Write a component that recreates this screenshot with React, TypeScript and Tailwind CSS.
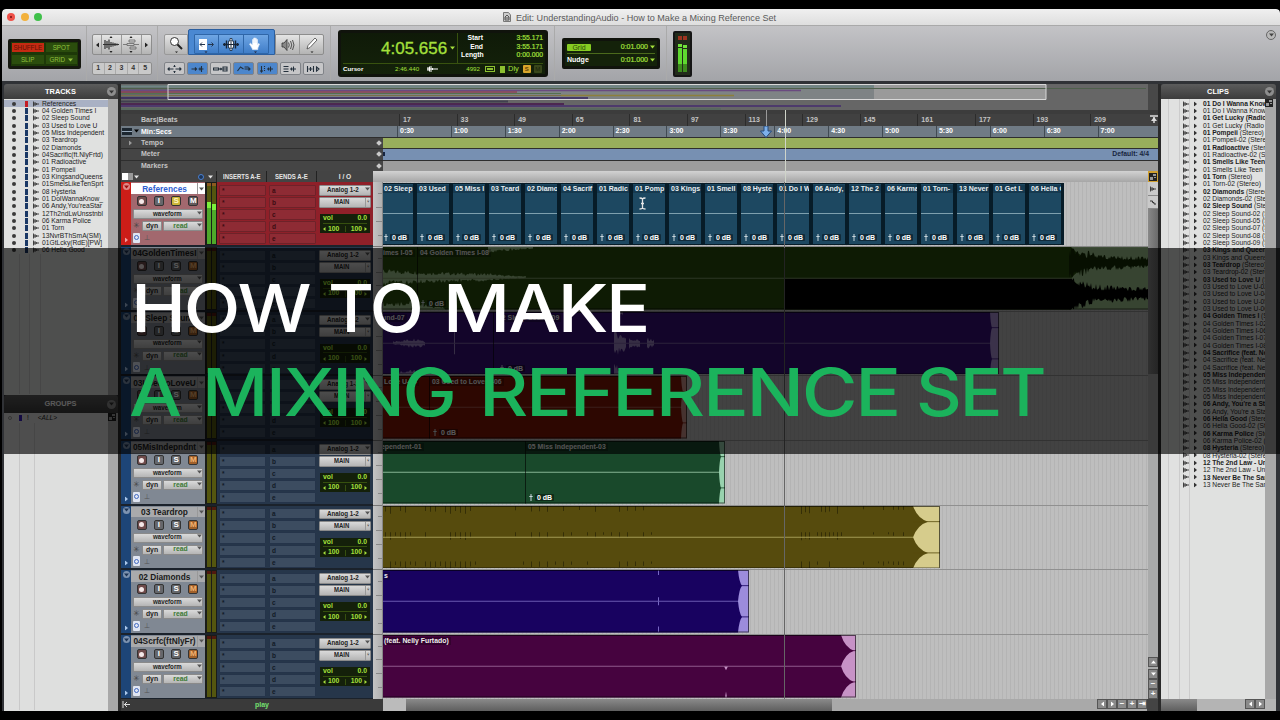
import React, { useLayoutEffect, useRef, useState } from "react";

const tracksList = [
  "References",
  "04 Golden Times I",
  "02 Sleep Sound",
  "03 Used to Love U",
  "05 Miss Independent",
  "03 Teardrop",
  "02 Diamonds",
  "04Sacrific(ft.NlyFrtd)",
  "01 Radioactive",
  "01 Pompeii",
  "03 KingsandQueens",
  "01SmelsLikeTenSprt",
  "08 Hysteria",
  "01 DoIWannaKnow_",
  "06 Andy,You'reaStar",
  "12Th2ndLwUnsstnbl",
  "06 Karma Police",
  "01 Torn",
  "13NvrBThSmA(SM)",
  "01GtLcky(RdE)[PW]",
  "06 Hella Good",
];

// [bold part, regular part]
const clipsList = [
  ["01 Do I Wanna Know", ""],
  ["", "01 Do I Wanna Know"],
  ["01 Get Lucky (Radio", ""],
  ["", "01 Get Lucky (Radio"],
  ["01 Pompeii", " (Stereo)"],
  ["", "01 Pompeii-02 (Stereo)"],
  ["01 Radioactive", " (Stereo)"],
  ["", "01 Radioactive-02 (Stereo)"],
  ["01 Smells Like Teen", ""],
  ["", "01 Smells Like Teen"],
  ["01 Torn", " (Stereo)"],
  ["", "01 Torn-02 (Stereo)"],
  ["02 Diamonds", " (Stereo)"],
  ["", "02 Diamonds-02 (Stereo)"],
  ["02 Sleep Sound", " (Stereo)"],
  ["", "02 Sleep Sound-02 (Stereo)"],
  ["", "02 Sleep Sound-05 (Stereo)"],
  ["", "02 Sleep Sound-07 (Stereo)"],
  ["", "02 Sleep Sound-08 (Stereo)"],
  ["", "02 Sleep Sound-09 (Stereo)"],
  ["03 Kings and Queens", ""],
  ["", "03 Kings and Queens"],
  ["03 Teardrop", " (Stereo)"],
  ["", "03 Teardrop-02 (Stereo)"],
  ["03 Used to Love U", " (Stereo)"],
  ["", "03 Used to Love U-02"],
  ["", "03 Used to Love U-04"],
  ["", "03 Used to Love U-05"],
  ["", "03 Used to Love U-06"],
  ["04 Golden Times I", " (Stereo)"],
  ["", "04 Golden Times I-02"],
  ["", "04 Golden Times I-06"],
  ["", "04 Golden Times I-07"],
  ["", "04 Golden Times I-08"],
  ["04 Sacrifice (feat. Nelly", ""],
  ["", "04 Sacrifice (feat. Nelly"],
  ["", "04 Sacrifice (feat. Nelly"],
  ["05 Miss Independent", ""],
  ["", "05 Miss Independent-01"],
  ["", "05 Miss Independent-02"],
  ["", "05 Miss Independent-03"],
  ["06 Andy, You're a Star", ""],
  ["", "06 Andy, You're a Star"],
  ["06 Hella Good", " (Stereo)"],
  ["", "06 Hella Good-02 (Stereo)"],
  ["06 Karma Police", " (Stereo)"],
  ["", "06 Karma Police-02 (Stereo)"],
  ["08 Hysteria", " (Stereo)"],
  ["", "08 Hysteria-02 (Stereo)"],
  ["12 The 2nd Law - Unsust", ""],
  ["", "12 The 2nd Law - Unsust"],
  ["13 Never Be The Same", ""],
  ["", "13 Never Be The Same"],
];

const refClips = [
  "02 Sleep",
  "03 Used",
  "05 Miss I",
  "03 Teard",
  "02 Diamo",
  "04 Sacrif",
  "01 Radic",
  "01 Pomp",
  "03 Kings",
  "01 Smell",
  "08 Hyste",
  "01 Do I W",
  "06 Andy,",
  "12 The 2",
  "06 Karma",
  "01 Torn-",
  "13 Never",
  "01 Get L",
  "06 Hella G",
];

const channels = [
  "References",
  "04GoldenTimesI",
  "02 Sleep Sound",
  "03UsedtoLoveU",
  "05MisIndepndnt",
  "03 Teardrop",
  "02 Diamonds",
  "04Scrfc(ftNlyFr)",
];

const bars = ["17", "33", "49", "65", "81", "97", "113", "129", "145", "161", "177", "193", "209"];
const times = ["0:30", "1:00", "1:30", "2:00", "2:30", "3:00", "3:30", "4:00", "4:30", "5:00", "5:30", "6:00", "6:30", "7:00"];

// stretches its text to a given width
const Fit = ({ width, className = "", children }: { width: number; className?: string; children: React.ReactNode }) => {
  const ref = useRef<HTMLSpanElement>(null);
  const [scale, setScale] = useState(1);
  useLayoutEffect(() => {
    if (ref.current) setScale(width / ref.current.offsetWidth);
  }, [width]);
  return (
    <span className={`inline-block whitespace-nowrap ${className}`} style={{ width }}>
      <span ref={ref} className="inline-block origin-left" style={{ transform: `scaleX(${scale})` }}>
        {children}
      </span>
    </span>
  );
};

const noise = (n: number) => {
  const v = Math.sin(n * 12.9898) * 43758.5453;
  return v - Math.floor(v);
};

// jagged band around a centre line
const band = (x0: number, x1: number, c: number, a0: number, a1: number) => {
  let top = "";
  let bottom = "";
  for (let x = x0; x <= x1; x += 1) {
    const amp = a0 + ((a1 - a0) * (x - x0)) / (x1 - x0);
    top += `L${x} ${(c - amp * (0.35 + 0.65 * noise(x + c))).toFixed(1)}`;
    bottom = `L${x} ${(c + amp * (0.35 + 0.65 * noise(x * 3 + c))).toFixed(1)}` + bottom;
  }
  return `M${x0} ${c}${top}${bottom}Z`;
};

// full channel that fades out at its right end
const body = (c: number, from: number, to: number) => {
  const d = to - from;
  return `M0 ${c - 15.5}H${from}Q${from + d * 0.3} ${c - 3} ${to} ${c}Q${from + d * 0.3} ${c + 3} ${from} ${c + 15.5}H0Z`;
};

const Caret = ({ className = "" }: { className?: string }) => (
  <svg className={`shrink-0 ${className}`} width="5" height="4" viewBox="0 0 5 4">
    <path d="M0 .5h5L2.5 3.5z" fill="currentColor" />
  </svg>
);

const WaveGlyph = () => (
  <svg width="7" height="6" viewBox="0 0 7 6" className="shrink-0">
    <path d="M.5 .5v5M2 1v4M3.3 2v2M0 3h6" stroke="#333" strokeWidth=".9" />
  </svg>
);

const PanelHead = ({ title }: { title: string }) => (
  <div className="flex h-full items-center rounded-t-[3px] bg-linear-to-b from-[#5c5c5c] to-[#3c3c3c] pr-[2px]">
    <span className="flex-1 pl-[10px] text-center text-[7.4px] font-bold text-white">{title}</span>
    <span className="flex h-[9px] w-[9px] items-center justify-center rounded-full bg-[#8d8d8d] text-[#333]">
      <Caret />
    </span>
  </div>
);

const Checker = () => (
  <svg width="8" height="8" viewBox="0 0 8 8">
    <path d="M0 0h8v8H0z" fill="#222" />
    <path d="M4 1h3v2H4zM1 4h3v3H1zM5 4h2v1H5z" fill="#999" />
  </svg>
);

const TitleBar = () => (
  <div className="flex h-[17px] shrink-0 items-center rounded-t-[4px] border-b border-[#a9a9a9] bg-linear-to-b from-[#f0f0f0] to-[#dedede] pl-[5px]">
    <div className="flex w-[496px] gap-[5.5px]">
      <span className="flex h-[8px] w-[8px] items-center justify-center rounded-full bg-[#ee5048]">
        <span className="h-[2px] w-[2px] rounded-full bg-[#701010]" />
      </span>
      <span className="h-[8px] w-[8px] rounded-full bg-[#f2b13c]" />
      <span className="h-[8px] w-[8px] rounded-full bg-[#3fc04a]" />
    </div>
    <svg width="8" height="10" viewBox="0 0 8 10">
      <path d="M.5.5h5L7.5 3v6.5h-7z" fill="#ccc" stroke="#777" />
      <path d="M2 8V5l2-2 2 2v3zM2 6h4" fill="none" stroke="#555" />
    </svg>
    <Fit width={260} className="mt-[3px] ml-[5px] text-[9.2px] text-[#5a5a5a]">
      Edit: UnderstandingAudio - How to Make a Mixing Reference Set
    </Fit>
  </div>
);

const toolBtn = "flex items-center justify-center border-r border-[#999] last:border-r-0";

const smallIcons = [
  "M1 4h5M2 2.5L.5 4 2 5.500M8 4h5M12 2.500L13.500 4 12 5.500M6 1.500h2M6 6.500h2M7 0v1M7 7v1",
  "M1 4h5M4.500 2.500L6 4 4.500 5.500M8 4h5M9.500 2.500v3M11 1v6",
  "M0 3h5v2H0zM5 4h3M7 2.800L8.200 4 7 5.200M9.500 2h4v4h-4zM9.500 4h4",
  "M1 6l3-4 3 2M8 2h4M8 4h5M12 2.500l1.500 1.500L12 5.500",
  "M2 1v6M.8 5.500L2 7l1.200-1.500M5 1v1M5 3v1M5 5v1M7.500 4h6M9 2.500v3M11 1.500v5",
  "M1 1.500h5M1 4h5M1 6.500h5M7.500 4h6M9 2.500v3M11 1.500v5",
  "M2 1v6M3 4h4M5 2v4M8 1v6M11 2l2.500 2L11 6z",
];

const smallStyles = [
  "bg-[#c6c6c8]",
  "bg-[#4c86cc]",
  "bg-[#c6c6c8]",
  "bg-[#4c86cc]",
  "bg-[#4c86cc]",
  "bg-[#c6c6c8]",
  "bg-[#c6c6c8]",
];

const Toolbar = () => (
  <div className="flex h-[55px] shrink-0 items-start bg-linear-to-b from-[#c3c3c6] to-[#a3a4a8]">
    {/* edit modes */}
    <div className="flex h-full w-[85px] items-center border-r border-[#aaa] pl-[6px]">
      <div className="grid h-[30px] w-[73px] grid-cols-2 items-center rounded-[2px] border-[3px] border-[#15170f] bg-[#1d3808] text-center text-[6.3px] leading-[9px] text-[#93c03d]">
        <span className="m-px bg-[#c42a12] text-[#5f1205]">SHUFFLE</span>
        <span className="m-px bg-[#2b4d0d]">SPOT</span>
        <span className="m-px bg-[#2b4d0d]">SLIP</span>
        <span className="m-px flex items-center justify-center gap-[3px] bg-[#2b4d0d]">
          GRID <Caret />
        </span>
      </div>
    </div>
    {/* zoom */}
    <div className="flex h-full w-[71px] flex-col items-center border-r border-[#aaa] pt-[8px]">
      <div className="flex h-[21px] w-[60px] rounded-[2px] border border-[#8d8d8d] bg-linear-to-b from-[#e4e4e4] to-[#b4b4b4]">
        <div className={`${toolBtn} w-[9px] text-[#222]`}>
          <Caret className="rotate-90" />
        </div>
        <div className={`${toolBtn} flex-1`}>
          <svg width="17" height="17" viewBox="0 0 17 17">
            <path d="M2 4v9M4 5v7M6 3.500v10M8 6v5M10 6.500v4M12 7v3M14 7.500v2M0 8.500h16" stroke="#333" strokeWidth="1.200" />
            <path d="M6.500 2L8 0l1.500 2zM6.500 15L8 17l1.500-2z" fill="#222" />
          </svg>
        </div>
        <div className={`${toolBtn} flex-1`}>
          <svg width="17" height="17" viewBox="0 0 17 17">
            <path d="M6 4h6v2H6zM4 7.500h7v2H4zM7 11h6v2H7zM0 8.500h4M11 8.500h5" fill="none" stroke="#666" strokeWidth=".8" />
            <path d="M6.500 2L8 0l1.500 2zM6.500 15L8 17l1.500-2z" fill="#222" />
          </svg>
        </div>
        <div className={`${toolBtn} w-[9px] text-[#222]`}>
          <Caret className="-rotate-90" />
        </div>
      </div>
      <div className="mt-[7px] grid h-[13px] w-[60px] grid-cols-5 items-center rounded-[2px] border border-[#8d8d8d] bg-[#c9c9c9] text-center text-[7px] font-bold text-[#333]">
        {[1, 2, 3, 4, 5].map((n) => (
          <span key={n} className="border-r border-[#aaa] last:border-r-0">{n}</span>
        ))}
      </div>
    </div>
    {/* edit tools */}
    <div className="h-full w-[173px] border-r border-[#aaa] pt-[3px] pl-[6px]">
      <div className="flex h-[26px] items-end">
        <div className={`h-[21px] w-[24px] rounded-l-[2px] border border-[#8d8d8d] bg-linear-to-b from-[#e4e4e4] to-[#b4b4b4] ${toolBtn}`}>
          <svg width="15" height="17" viewBox="0 0 15 17">
            <circle cx="5.500" cy="5.500" r="4" fill="#fff" stroke="#333" />
            <path d="M8.500 8.500l4.500 4.500" stroke="#222" strokeWidth="2" />
            <path d="M6 15.500h3l-1.500 1.500z" fill="#222" />
          </svg>
        </div>
        <div className="flex h-[26px] w-[87px] items-end rounded-t-[2px] border border-[#2c5f9f] bg-[#4a88d2] px-[5px]">
          <div className="grid h-[20px] w-full grid-cols-3 rounded-[1px] border border-[#2f66a8] bg-linear-to-b from-[#6fa6e4] to-[#3f7dc8]">
            <div className="flex items-center justify-center border-r border-[#2f66a8]">
              <svg width="18" height="17" viewBox="0 0 18 17">
                <path d="M1 3h8v11H1z" fill="#fff" />
                <path d="M2 8.500h5M4 6.500l-2 2 2 2M10 8.500h5M13.500 6.500l2 2-2 2" fill="none" stroke="#24364e" />
                <path d="M6.500 15.500h3L8 17z" fill="#223" />
              </svg>
            </div>
            <div className="flex items-center justify-center border-r border-[#2f66a8]">
              <svg width="18" height="17" viewBox="0 0 18 17">
                <path d="M1 8.500h16M2.500 7v3M4.500 4.500v8M13.500 4.500v8M15.500 7v3" stroke="#182638" strokeWidth="1.400" />
                <path d="M6.500 5H8V2.500h2V5h1.500v7H10v2.500H8V12H6.500z" fill="#fff" stroke="#182638" strokeWidth=".8" />
                <path d="M3 8.500h12M9 4v9" stroke="#182638" />
              </svg>
            </div>
            <div className="flex items-center justify-center">
              <svg width="15" height="17" viewBox="0 0 15 17">
                <path d="M4 12L1.500 8l1-.8L4.500 9V3.500h1.200V7V2h1.300v5V2.200h1.300V7V3.500h1.200V9l1-1.500 1 .6L9.800 12v1.500H4.500z" fill="#fff" stroke="#e8f0fb" strokeWidth=".6" />
                <path d="M6 15.500h3l-1.500 1.500z" fill="#223" />
              </svg>
            </div>
          </div>
        </div>
        <div className="flex h-[21px] w-[49px] rounded-r-[2px] border border-[#8d8d8d] bg-linear-to-b from-[#e4e4e4] to-[#b4b4b4]">
          <div className={`${toolBtn} flex-1`}>
            <svg width="14" height="14" viewBox="0 0 14 14">
              <path d="M1 5h2l3-3.500v11L3 9H1z" fill="#888" stroke="#333" strokeWidth=".8" />
              <path d="M7.500 4.500q1.500 2.500 0 5M9.500 3q2.500 4 0 8M11.500 2q3 5 0 10" fill="none" stroke="#444" strokeWidth=".9" />
            </svg>
          </div>
          <div className={`${toolBtn} flex-1`}>
            <svg width="14" height="17" viewBox="0 0 14 17">
              <path d="M2 13l1-3.500L10 2l2 2-7 7.500z" fill="#fff" stroke="#444" strokeWidth=".8" />
              <path d="M5.500 15.500h3L7 17z" fill="#222" />
            </svg>
          </div>
        </div>
      </div>
      <div className="mt-[7px] flex w-[160px] justify-between">
        {smallIcons.map((d, i) => (
          <span key={i} className={`flex h-[13px] w-[21px] items-center justify-center rounded-[2px] border border-[#808388] ${smallStyles[i]}`}>
            <svg width="16" height="8" viewBox="0 0 15 8">
              <path d={d} fill="none" stroke="#24303c" strokeWidth="1.100" />
            </svg>
          </span>
        ))}
      </div>
    </div>
    {/* main counter */}
    <div className="h-full w-[224px] border-r border-[#aaa] pt-[4px] pl-[7px]">
      <div className="flex h-[47px] w-[210px] flex-col rounded-[3px] border-[3px] border-[#10130c] bg-linear-to-b from-[#0f1a08] to-[#14220a] px-[2px] text-[#a5e03c]">
        <div className="flex h-[31px] border-b border-[#38520f]">
          <div className="flex w-[115px] items-center justify-end gap-[3px] border-r border-[#38520f] pr-[2px]">
            <Fit width={66} className="text-[17px] leading-none [-webkit-text-stroke:.3px_#a5e03c]">
              4:05.656
            </Fit>
            <Caret />
          </div>
          <div className="flex flex-1 flex-col pt-px pl-[3px] text-[6.800px] leading-[8.500px]">
            {[
              ["Start", "3:55.171"],
              ["End", "3:55.171"],
              ["Length", "0:00.000"],
            ].map(([k, v]) => (
              <div key={k} className="flex justify-between">
                <span className="w-[22px] text-right font-bold text-white">{k}</span>
                <span className="[-webkit-text-stroke:.2px_#a5e03c]">{v}</span>
              </div>
            ))}
          </div>
        </div>
        <div className="flex h-[10px] items-center text-[6.200px]">
          <span className="w-[52px] font-bold text-white">Cursor</span>
          <span className="w-[30px]">2:46.440</span>
          <svg width="12" height="6" viewBox="0 0 12 6" className="ml-[2px]">
            <path d="M1 1v4M2.500 .5v5M4 0v6M5.500 2v2M0 3h11" stroke="#fff" />
          </svg>
          <span className="w-[41px] text-right">4992</span>
          <span className="ml-[5px] flex h-[6px] w-[10px] items-center justify-center border border-[#8cc030]">
            <span className="h-[2px] w-[6px] bg-[#8cc030]" />
          </span>
          <span className="ml-[5px] h-[7px] w-[5px] bg-[#8cc030]" />
          <span className="ml-[3px] text-[7.500px]">Dly</span>
          <span className="ml-[4px] flex h-[8px] w-[8px] items-center justify-center rounded-[1px] bg-[#d9a62c] text-[6px] font-bold text-[#5c4205]">S</span>
          <span className="ml-[3px] flex h-[8px] w-[8px] items-center justify-center rounded-[1px] bg-[#39471b] text-[6px] text-[#1a230a]">M</span>
        </div>
      </div>
    </div>
    {/* grid and nudge */}
    <div className="flex h-full w-[112px] items-center border-r border-[#aaa] pl-[7px]">
      <div className="flex h-[31px] w-[98px] flex-col rounded-[2px] border-[3px] border-[#10130c] bg-[#14220a] px-[2px] text-[7px] text-[#a5e03c]">
        <div className="flex h-[13px] items-center border-b border-[#4b6a1c]">
          <span className="h-[7px] w-[24px] rounded-[1px] bg-[#86cc22] text-center leading-[7px] text-[#2c4a08]">Grid</span>
          <span className="flex-1 text-right [-webkit-text-stroke:.2px_#a5e03c]">0:01.000</span>
          <Caret className="ml-[2px]" />
        </div>
        <div className="flex flex-1 items-center">
          <span className="font-bold text-white">Nudge</span>
          <span className="flex-1 text-right [-webkit-text-stroke:.2px_#a5e03c]">0:01.000</span>
          <Caret className="ml-[2px]" />
        </div>
      </div>
    </div>
    {/* output meter */}
    <div className="pt-[5px] pl-[6px]">
      <div className="flex h-[46px] w-[19px] justify-center gap-px rounded-[2px] border-2 border-[#151515] bg-[#222b1b] pt-[3px] pb-[3px]">
        {[0, 1].map((n) => (
          <div key={n} className="flex w-[4px] flex-col">
            <span className="h-[4px] bg-[#9c3420]" />
            <span className={`bg-[#71e53a] ${n ? "mt-[5px] h-[3px]" : "mt-[4px] h-[3px]"}`} />
            <span className="mt-px flex-1 bg-[#5fd92f]" />
            <span className="h-[8px] bg-[#3d8c1d]" />
          </div>
        ))}
      </div>
    </div>
    <div className="flex flex-1 justify-end pt-[4px] pr-[4px]">
      <span className="flex h-[10px] w-[10px] items-center justify-center rounded-full border border-[#666] bg-[#b9b9b9] text-[#444]">
        <Caret />
      </span>
    </div>
  </div>
);

const LeftPanel = () => (
  <div className="flex w-[114px] shrink-0 flex-col">
    <div className="h-[15px]">
      <PanelHead title="TRACKS" />
    </div>
    <div className="flex h-[296px] bg-[#e0e1e0]">
      <div className="flex-1 pt-[1px]">
        {tracksList.map((name, i) => (
          <div key={name} className={`flex h-[7.333px] items-center text-[6.700px] leading-none text-[#222] ${i === 0 ? "bg-[#a9b1c4]" : ""}`}>
            <span className="ml-[8px] h-[4px] w-[4px] rounded-full bg-[#3a3a3a]" />
            <span className={`ml-[9px] h-[6px] w-[3px] ${i === 0 ? "bg-[#c41c24]" : "bg-[#1a3866]"}`} />
            <span className="ml-[5px] flex w-[9px] items-center">
              <WaveGlyph />
            </span>
            <span className="pt-px whitespace-nowrap">{name}</span>
          </div>
        ))}
        <div className="ml-[15px] h-[140px] w-[22px] border-x border-[#c9c9c9]">
          <div className="ml-[9px] h-full border-l border-[#c9c9c9]" />
        </div>
      </div>
      <div className="w-[10px] bg-[#a8a8a8]" />
    </div>
    <div className="h-[18px]">
      <PanelHead title="GROUPS" />
    </div>
    <div className="flex flex-1 bg-[#dedfde]">
      <div className="flex-1">
        <div className="flex h-[10px] items-center text-[6.500px] text-[#222]">
          <span className="ml-[4px] h-[4px] w-[4px] rounded-full border border-[#999]" />
          <span className="ml-[7px] h-[6px] w-[3px] bg-[#3a20c0]" />
          <span className="ml-[5px]">!</span>
          <span className="ml-[9px] italic">&lt;ALL&gt;</span>
        </div>
        <div className="ml-[15px] h-full max-h-[287px] w-[16px] border-x border-[#c9c9c9]" />
      </div>
      <div className="w-[10px] bg-[#a8a8a8]">
        <Checker />
      </div>
    </div>
  </div>
);

const Overview = () => (
  <div className="relative h-[26px] bg-[#666]">
    <svg className="block" width="1037" height="26" viewBox="0 0 1037 26">
      <path d="M47 .5h878v15H47z" fill="#9a9a9a" />
      <path d="M0 1h753v14H0z" fill="#5d686c" fillOpacity=".45" />
      <path d="M0 4.500h1025" stroke="#4f604c" />
      <path d="M0 2.500h753" stroke="#6e8584" strokeWidth="2" />
      <path d="M0 6.500h680" stroke="#6a4a80" strokeWidth="1.500" />
      <path d="M0 8h396" stroke="#8c4256" strokeWidth="1.500" />
      <path d="M0 9.500h440" stroke="#557050" />
      <path d="M440 11.500h173" stroke="#8c7f3c" strokeWidth="1.500" />
      <path d="M0 14h467" stroke="#35235f" strokeWidth="1.500" />
      <path d="M0 11.500h440" stroke="#7a6e4a" />
      <path d="M0 17.500h387" stroke="#40404f" strokeWidth="2" />
      <path d="M0 20h443" stroke="#4c2850" strokeWidth="2" />
      <path d="M0 22h720" stroke="#4d3a6c" strokeWidth="2" />
      <path d="M0 25h600" stroke="#4a6a58" />
      <path d="M47 .5h878v15H47z" fill="none" stroke="#d8d8d8" />
    </svg>
    <span className="absolute top-0 right-0 h-[26px] w-[10px] bg-[#484848]" />
  </div>
);

const rulerLabel = "w-[262px] shrink-0 pl-[20px] text-[7px] font-bold leading-none";

const Plus = () => <span className="mr-[2px] ml-auto h-[4px] w-[4px] rotate-45 bg-[#c9c9c9]" />;

const Rulers = () => (
  <div className="bg-[#3c3c3c] pt-[4px] text-[#c4c4c4]">
    <div className="flex h-[11.500px] items-center bg-[#414141]">
      <span className={rulerLabel}>Bars|Beats</span>
      <div className="ml-[16px] flex h-full overflow-hidden text-[7px] font-bold">
        {bars.map((b) => (
          <span key={b} className="flex w-[57.600px] shrink-0 items-center border-l border-[#2c2c2c] pl-[3px]">{b}</span>
        ))}
      </div>
      <svg className="ml-auto" width="8" height="9" viewBox="0 0 8 9">
        <path d="M0 1h8M4 2v6" stroke="#ddd" strokeWidth="1.500" />
        <path d="M1 6l3-4 3 4z" fill="#ddd" />
      </svg>
    </div>
    <div className="relative flex h-[11.500px] items-center bg-[#707b85] text-white">
      <div className="flex w-[20px] items-center pl-px text-black">
        <svg width="10" height="7" viewBox="0 0 10 7">
          <path d="M0 0h10v7H0z" fill="#1d2730" />
          <path d="M0 3.500h10" stroke="#9ab" />
        </svg>
        <Caret className="ml-[2px]" />
      </div>
      <span className="w-[256px] text-[7px] font-bold leading-none">Min:Secs</span>
      <div className="flex h-full overflow-hidden text-[7px] font-bold">
        {times.map((t) => (
          <span key={t} className="flex w-[53.900px] shrink-0 items-center border-l border-[#404a52] pl-[2px]">{t}</span>
        ))}
      </div>
      <svg className="absolute top-0 left-[639px]" width="12" height="12" viewBox="0 0 12 12">
        <path d="M4 0h4v5h3.500L6 11.500.5 5H4z" fill="#7db0ea" stroke="#254a7c" />
      </svg>
    </div>
    {["Tempo", "Meter", "Markers"].map((name, i) => (
      <div key={name} className="flex h-[11.333px] items-stretch border-t border-[#2e2e2e] bg-[#454545]">
        <div className="flex w-[262px] items-center text-[7px] font-bold">
          <span className="w-[20px] pl-[7px] text-[#999]">{i === 0 && <Caret className="-rotate-90" />}</span>
          {name}
          <Plus />
        </div>
        <div
          className={`flex flex-1 items-center justify-end pr-[9px] text-[6.800px] font-bold text-[#17253f] ${
            i === 0 ? "bg-[#98ae5c]" : i === 1 ? "bg-[#7790b2]" : "bg-[#9d9d9d]"
          }`}
        >
          {i === 1 && (
            <>
              <span className="mr-auto h-[4px] w-[2px] bg-[#17253f]" />
              Default: 4/4
            </>
          )}
        </div>
      </div>
    ))}
  </div>
);

const RoundBtn = ({ children, className }: { children: React.ReactNode; className: string }) => (
  <span className={`flex h-[10px] w-[10px] items-center justify-center rounded-[2px] border border-[#333] text-[8px] font-bold leading-none ${className}`}>
    {children}
  </span>
);

const light = "rounded-[1px] border border-[#8a8a8a] bg-linear-to-b from-[#dadada] to-[#b5b5b5]";

const PanArrow = ({ flip = false }: { flip?: boolean }) => (
  <svg width="3" height="4" viewBox="0 0 3 4" className={flip ? "rotate-180" : ""}>
    <path d="M2.500 0v4L0 2z" fill="currentColor" />
  </svg>
);

const Strip = ({ name, active }: { name: string; active: boolean }) => (
  <div className={`flex h-[64.667px] shrink-0 border-b-[2px] border-[#1b222b] ${active ? "bg-[#8f2029]" : "bg-[#26364a]"}`}>
    <div className={`flex w-[10px] flex-col items-center justify-between pt-px pb-[3px] ${active ? "bg-[#cc1d18]" : "bg-[#1d4577]"}`}>
      <span className={`flex h-[7px] w-[7px] items-center justify-center rounded-full ${active ? "bg-[#e08a88] text-[#a01010]" : "bg-[#7d93b0] text-[#1d3557]"}`}>
        <Caret />
      </span>
      <Caret className={`-rotate-90 ${active ? "text-[#f0a0a0]" : "text-[#a9c6ea]"}`} />
    </div>
    <div className={`w-[74px] ${active ? "bg-[#a2686e]" : "bg-[#808893]"}`}>
      <div className={`mt-px flex h-[10.500px] items-center justify-center pr-px ${active ? "bg-white text-[#2f5ed0]" : "bg-[#a9aaac] text-[#1a1a1a]"}`}>
        <span className="flex-1 overflow-hidden pl-px text-center text-[8.300px] font-bold leading-[10px] whitespace-nowrap">{name}</span>
        <span className="flex h-full w-[7px] items-center justify-center border-l border-[#999] text-[#555]">
          <Caret />
        </span>
      </div>
      <div className="mt-[2.500px] flex gap-[7.300px] pl-[5.500px]">
        <RoundBtn className="bg-[#6e4a4a] text-white">
          <span className="h-[5px] w-[5px] rounded-full bg-[#f4e8e8]" />
        </RoundBtn>
        <RoundBtn className="bg-[#65676b] text-white">I</RoundBtn>
        <RoundBtn className={active ? "bg-[#cdb63a] text-[#fff7c4]" : "bg-[#65676b] text-white"}>S</RoundBtn>
        <RoundBtn className={active ? "bg-[#65595c] text-white" : "bg-[#a0602a] text-[#f0b070]"}>M</RoundBtn>
      </div>
      <div className={`mx-[2px] mt-[3px] flex h-[10px] items-center ${light}`}>
        <span className="flex-1 pl-[3px] text-center text-[6.800px] font-bold leading-none text-[#222]">
          <Fit width={29}>waveform</Fit>
        </span>
        <Caret className="mb-[3px] text-[#555]" />
      </div>
      <div className="mt-[2px] mr-[2px] flex h-[10px] items-center gap-px">
        <span className="w-[10px] text-center text-[8px] leading-none text-[#444]">✳</span>
        <span className={`h-full w-[20px] text-center text-[6.800px] font-bold leading-[8px] text-[#222] ${light}`}>dyn</span>
        <span className={`flex h-full flex-1 items-center text-[6.800px] font-bold leading-none text-[#3c7a34] ${light}`}>
          <span className="flex-1 text-center">read</span>
          <Caret className="mb-[3px] text-[#555]" />
        </span>
      </div>
      <div className="mt-[1.500px] flex items-center gap-[4px] pl-[2px]">
        <span className="flex h-[10px] w-[7px] items-center justify-center rounded-[1px] bg-[#dfe5f2]">
          <span className="h-[5px] w-[5px] rounded-full border border-[#4168c0]" />
        </span>
        <span className="text-[7px] leading-none text-[#555]">⊥</span>
      </div>
    </div>
    <div className="flex w-[12px] justify-center gap-px bg-[#1a1c18] py-px">
      {[0, 1].map((n) => (
        <div key={n} className="flex w-[4px] flex-col bg-[#54560f]">
          <span className={`h-[3px] ${active ? "bg-[#8c5a20]" : "bg-[#50180f]"}`} />
          {active && (
            <>
              <span className={n ? "h-[18px]" : "h-[16px]"} />
              <span className="h-[6px] bg-[#7cf03c]" />
              <span className="flex-1 bg-[#4ea82a]" />
            </>
          )}
        </div>
      ))}
    </div>
    {["*****", "abcde"].map((letters) => (
      <div key={letters} className="flex w-[50px] flex-col gap-px pt-[2.500px] pr-[1.500px] pl-[2px]">
        {letters.split("").map((l, i) => (
          <span
            key={i}
            className={`h-[11.100px] rounded-[1px] border pl-[2px] text-[6.500px] font-bold leading-[9px] ${
              active ? "border-[#6e2229] bg-[#8e2b34] text-[#3c0c12]" : "border-[#25344a] bg-[#3c4c60] text-[#121a26]"
            }`}
          >
            {l}
          </span>
        ))}
      </div>
    ))}
    <div className="w-[56px] px-[2px] pt-[3px] text-[6.800px] font-bold leading-none text-[#222]">
      <div className={`flex h-[10.500px] items-center ${light}`}>
        <span className="flex-1 text-center">
          <Fit width={32}>Analog 1-2</Fit>
        </span>
        <Caret className="mb-[3px] text-[#555]" />
      </div>
      <div className={`mt-[1.500px] flex h-[10.500px] items-center ${light}`}>
        <span className="flex-1 pr-[2px] text-center">
          <Fit width={15}>MAIN</Fit>
        </span>
        <span className="h-full w-[5px] border-l border-[#999] text-center text-[6px]">♀</span>
      </div>
      <div className="mx-px mt-[6.500px] flex h-[19px] flex-col justify-around bg-[#14200a] px-[3px] text-[#a6e03c]">
        <div className="flex justify-between border-b border-[#36500f] pb-px">
          <span>vol</span>
          <span>0.0</span>
        </div>
        <div className="flex items-center justify-between">
          <span className="flex items-center gap-[2px]">
            <PanArrow />
            100
          </span>
          <span className="h-[6px] w-px bg-[#36500f]" />
          <span className="flex items-center gap-[2px]">
            100
            <PanArrow flip />
          </span>
        </div>
      </div>
    </div>
  </div>
);

const Gain = ({ className = "" }: { className?: string }) => (
  <span className={`flex h-[8px] items-center gap-[2px] text-[7px] font-bold leading-none text-white ${className}`}>
    <svg width="4" height="7" viewBox="0 0 4 7">
      <path d="M2 0v7M.3 2.500h3.400" stroke="#c9d6dc" />
    </svg>
    <span className="rounded-[1px] bg-black/40 px-[2px]">0 dB</span>
  </span>
);

type Wave = {
  width: number;
  from: number;
  to: number;
  dark: string;
  pale: string;
  line: string;
  splits?: number[];
  labels?: { x: number; text: string }[];
  gains?: number[];
  extra?: React.ReactNode;
};

const ticks = (from: number, to: number, step: number, y: number, h: number) => {
  let d = "";
  for (let x = from; x < to; x += step) {
    if (noise(x + y) > 0.3) d += `M${x} ${y}v${(h * (0.4 + 0.6 * noise(x))).toFixed(1)}`;
  }
  return d;
};

const waves: Wave[] = [
  {
    width: 766,
    from: 688,
    to: 722,
    dark: "#294e0c",
    pale: "#9fc48c",
    line: "#7f9a68",
    splits: [34],
    labels: [
      { x: -2, text: "imes I-05" },
      { x: 35, text: "04 Golden Times I-08" },
    ],
    gains: [37],
    extra: (
      <>
        <path d={band(0, 35, 30, 8, 7) + band(35, 110, 30, 6, 4) + band(110, 143, 30, 3, 1)} fill="#9fc48c" />
        <path d={band(0, 35, 62, 9, 9) + band(35, 62, 62, 7, 2) + band(105, 150, 0, 6, 2)} fill="#9fc48c" />
        <path d="M402 31H688Q698 44 722 47Q698 50 688 62H402z" fill="#000" />
        <path d={band(686, 720, 15.5, 17, 8) + band(720, 765, 15.5, 8, 6)} fill="#142c05" />
        <path d={band(686, 720, 46.5, 17, 9) + band(720, 765, 46.5, 9, 7)} fill="#000" />
      </>
    ),
  },
  {
    width: 616,
    from: 607,
    to: 609,
    dark: "#38107a",
    pale: "#a890d4",
    line: "#7d62a8",
    splits: [110],
    labels: [
      { x: -3, text: "und-07" },
      { x: 113, text: "02 Sleep Sound-09" },
    ],
    gains: [116],
    extra: (
      <path
        d={band(10, 34, 31, 2, 6) + band(34, 42, 31, 6, 3) + band(231, 243, 31, 14, 8) + band(246, 257, 31, 6, 4) + band(264, 271, 31, 6, 4) + band(16, 32, 62, 4, 5) + band(231, 240, 62, 13, 3) + band(231, 240, 0, 8, 4) + "M71 20h1v22h-1z"}
        fill="#9c84c4"
      />
    ),
  },
  {
    width: 304,
    from: 298,
    to: 300,
    dark: "#801405",
    pale: "#c89088",
    line: "#a8584c",
    splits: [46],
    labels: [
      { x: -1, text: "Love U-04" },
      { x: 47, text: "03 Used to Love U-06" },
    ],
    gains: [49],
  },
  {
    width: 342,
    from: 336,
    to: 338,
    dark: "#19492b",
    pale: "#98d2ae",
    line: "#86b494",
    splits: [142],
    labels: [
      { x: -4, text: "ependent-01" },
      { x: 143, text: "05 Miss Independent-03" },
    ],
    gains: [145],
  },
  {
    width: 557,
    from: 530,
    to: 545,
    dark: "#564b0d",
    pale: "#d6cc8c",
    line: "#a39a55",
    extra: (
      <path
        d={[0, 26, 55].map((y) => ticks(2.5, 95, 5, y, 8) + ticks(132.5, 275, 8, y, 6) + ticks(418.5, 460, 4, y, 8) + ticks(480.5, 525, 5, y, 4)).join("")}
        stroke="#2c2706"
        strokeOpacity=".8"
        fill="none"
      />
    ),
  },
  {
    width: 366,
    from: 355,
    to: 359,
    dark: "#180260",
    pale: "#9c8cdc",
    line: "#6a5ab0",
    labels: [{ x: -1, text: "s" }],
    extra: <path d="M275.500 0v5M275.500 27v8M275.500 56v6" stroke="#7767c4" />,
  },
  {
    width: 473,
    from: 458,
    to: 471,
    dark: "#46033f",
    pale: "#c792c6",
    line: "#8f5a8c",
    labels: [{ x: -1, text: "(feat. Nelly Furtado)" }],
    extra: <path d="M341 31h4l-2 4zM342 62l1-6 1 6z" fill="#c792c6" />,
  },
];

const WaveClip = ({ wave: w }: { wave: Wave }) => (
  <div className="relative h-[62.500px] overflow-hidden" style={{ width: w.width }}>
    <svg width={w.width} height="62.500" viewBox={`0 0 ${w.width} 62`} preserveAspectRatio="none" className="block">
      <path d={`M0 0h${w.width}v62H0z`} fill={w.pale} />
      <path d={body(15.5, w.from, w.to) + body(46.5, w.from, w.to)} fill={w.dark} />
      <path d={`M${w.from} 15.500H${w.width}M${w.from} 46.500H${w.width}`} stroke={w.dark} strokeWidth=".8" />
      {w.extra}
      <path d={`M0 31H${w.from}`} stroke={w.line} />
      {w.splits?.map((x) => (
        <path key={x} d={`M${x}.5 0v62`} stroke="#000" strokeOpacity=".6" />
      ))}
      <path d={`M0 .5H${w.width - 0.5}V61.500H0`} fill="none" stroke="#000" strokeOpacity=".6" />
    </svg>
    {w.labels?.map((l) => (
      <span key={l.text} className="absolute top-[2px] bg-black/25 px-[2px] text-[6.900px] font-bold leading-[8px] whitespace-nowrap text-[#eee]" style={{ left: l.x }}>
        {l.text}
      </span>
    ))}
    {w.gains?.map((x) => (
      <span key={x} className="absolute bottom-[2px]" style={{ left: x + 1 }}>
        <Gain />
      </span>
    ))}
  </div>
);

const Lanes = () => (
  <div className="relative flex-1 overflow-hidden bg-[repeating-linear-gradient(90deg,#bebebe_0_3px,#b4b4b4_3px_4px)]">
    <div className="flex h-[64.667px] flex-col border-b border-[#888]">
      <div className="flex h-[62.500px] pt-[.5px]">
        {refClips.map((name, i) => (
          <div
            key={name}
            className={`flex shrink-0 flex-col justify-between overflow-hidden border-y border-r-[3px] border-[#071c28] bg-[linear-gradient(#1d4861_0_29px,#7ea0ae_29px_30px,#1d4861_30px)] pt-px pb-[2px] ${
              i === 0 ? "w-[33px]" : "w-[36px] border-l"
            }`}
          >
            <span className={`bg-[#163a50] text-[7px] font-bold leading-[8px] whitespace-nowrap text-[#e6eef2] ${i === 0 ? "pl-px" : "pl-[2px]"}`}>{name}</span>
            <Gain className={i === 0 ? "pl-px" : "pl-[3px]"} />
          </div>
        ))}
      </div>
    </div>
    {waves.map((w, i) => (
      <div key={i} className="h-[64.667px] border-b border-[#909090]">
        <WaveClip wave={w} />
      </div>
    ))}
    <span className="absolute top-0 left-[401px] h-full w-px bg-[#666]" />
    <svg className="absolute top-[15px] left-[256px]" width="7" height="13" viewBox="0 0 7 13">
      <path d="M.5 1q2.500 0 3 1 .5-1 3-1M.5 12q2.500 0 3-1 .5 1 3 1M3.500 2v9M2 6.500h3" stroke="#e6e6e6" strokeWidth="1.300" fill="none" />
    </svg>
  </div>
);

const ScrollBtn = ({ children }: { children: React.ReactNode }) => (
  <span className="flex h-[10px] w-[10px] items-center justify-center border border-[#555] bg-[#8a8a8a] text-[8px] font-bold leading-none text-white">{children}</span>
);

const Editor = () => (
  <div className="relative flex w-[1037px] shrink-0 flex-col">
    <Overview />
    <Rulers />
    <div className="flex h-[11.500px] shrink-0 items-center bg-[#444] text-[6.600px] font-bold text-[#e4e4e4]">
      <div className="flex w-[95px] items-center">
        <span className="ml-px h-[7px] w-[6px] bg-white" />
        <span className="h-[7px] w-[5px] bg-[#999]" />
        <Caret className="ml-px" />
        <span className="ml-auto h-[6px] w-[6px] rounded-full border border-[#4a7fd0] bg-[#1d3557]" />
        <Caret className="mr-[3px] ml-[4px]" />
      </div>
      <span className="flex h-full w-[50px] items-center justify-center border-l border-[#222]">
        <Fit width={38}>INSERTS A-E</Fit>
      </span>
      <span className="flex h-full w-[50px] items-center justify-center border-l border-[#222]">
        <Fit width={33}>SENDS A-E</Fit>
      </span>
      <span className="h-full w-[57px] border-l border-[#222] text-center leading-[11px]">I / O</span>
      <span className="h-full flex-1 bg-linear-to-b from-[#d2d2d2] to-[#a6a6a6]" />
      <span className="flex h-full w-[10px] items-center justify-center bg-[#d0a030]">
        <Checker />
      </span>
    </div>
    <div className="flex h-[516.500px] shrink-0 overflow-hidden">
      <div className="w-[252px] shrink-0">
        {channels.map((c, i) => (
          <Strip key={c} name={c} active={i === 0} />
        ))}
      </div>
      <div className="w-[10px] shrink-0 border-r border-[#888] bg-[linear-gradient(90deg,#c4c4c4,#b0b0b0)]">
        {channels.map((c) => (
          <div key={c} className="flex h-[64.667px] flex-col items-end justify-around border-b border-[#777] py-[4px]">
            <span className="h-px w-[4px] bg-[#888]" />
            <span className="h-px w-[6px] bg-[#888]" />
            <span className="h-px w-[6px] bg-[#888]" />
            <span className="h-px w-[4px] bg-[#888]" />
          </div>
        ))}
      </div>
      <Lanes />
      <div className="flex w-[10px] shrink-0 flex-col items-center bg-[#a9aaaa]">
        <span className="flex h-[14px] w-full items-center justify-center border-b border-[#888] bg-[#c9c9c9]">
          <WaveGlyph />
        </span>
        <span className="flex h-[13px] w-full items-center justify-center border-b border-[#888] bg-[#c9c9c9]">
          <svg width="6" height="5" viewBox="0 0 6 5">
            <path d="M0 1h2.500v1.500H4V4h2" fill="none" stroke="#333" />
          </svg>
        </span>
        <span className="h-[165px] w-full bg-[linear-gradient(90deg,#888,#6a6a6a)]" />
        <div className="mt-auto">
          <ScrollBtn>
            <Caret className="rotate-180" />
          </ScrollBtn>
          <span className="block h-[2px]" />
          <ScrollBtn>
            <Caret />
          </ScrollBtn>
          <ScrollBtn>−</ScrollBtn>
          <ScrollBtn>+</ScrollBtn>
        </div>
      </div>
    </div>
    <div className="flex flex-1 bg-[#a9a9a9]">
      <div className="flex w-[262px] items-center bg-[#3a3a3a] text-[7px] font-bold text-[#74e070]">
        <svg className="ml-px" width="8" height="7" viewBox="0 0 8 7">
          <path d="M1 0v7M2 3.500h6M5 1L2.500 3.500 5 6" stroke="#ddd" fill="none" />
        </svg>
        <span className="ml-[125px]">play</span>
      </div>
      <span className="w-[23px] bg-[#bbb]" />
      <span className="w-[426px] bg-linear-to-b from-[#8a8a8a] to-[#5f5f5f]" />
      <div className="ml-auto flex">
        <ScrollBtn>
          <Caret className="rotate-90" />
        </ScrollBtn>
        <ScrollBtn>
          <Caret className="-rotate-90" />
        </ScrollBtn>
        <ScrollBtn>−</ScrollBtn>
        <ScrollBtn>+</ScrollBtn>
        <ScrollBtn>⇥</ScrollBtn>
      </div>
      <span className="w-[11px] bg-[#444]" />
    </div>
    <span className="absolute top-[26px] left-[663.500px] h-[73px] w-px bg-[#cfd4c9]" />
    <span className="absolute top-[26px] left-[645px] h-[16px] w-px bg-[#999]" />
  </div>
);

const ClipsPanel = () => (
  <div className="flex w-[115px] shrink-0 flex-col">
    <div className="h-[15px]">
      <PanelHead title="CLIPS" />
    </div>
    <div className="flex h-[600px] bg-[#e0e1e0]">
      <div className="w-[104px] overflow-hidden bg-[linear-gradient(90deg,transparent_7px,#ccc_7px_8px,transparent_8px_18px,#ccc_18px_19px,transparent_19px_28px,#ccc_28px_29px,transparent_29px)] pt-[1px]">
        {clipsList.map(([bold, rest], i) => (
          <div key={i} className="flex h-[7.340px] items-center text-[6.700px] leading-none whitespace-nowrap text-[#1c1c1c]">
            <span className="ml-[22px] w-[10px] shrink-0">
              <WaveGlyph />
            </span>
            <span className="w-[10px] shrink-0 text-[#333]">
              <Caret className="-rotate-90" />
            </span>
            <span className="pt-px whitespace-pre">
              <b className="tracking-[-0.050px]">{bold}</b>
              {rest}
            </span>
          </div>
        ))}
      </div>
      <div className="flex-1 bg-[#a8a8a8]">
        <Checker />
      </div>
    </div>
    <div className="flex flex-1 bg-[#b4b4b4]">
      <span className="w-[36px] bg-linear-to-b from-[#8a8a8a] to-[#5f5f5f]" />
      <div className="mr-[11px] ml-auto flex">
        <ScrollBtn>
          <Caret className="rotate-90" />
        </ScrollBtn>
        <ScrollBtn>
          <Caret className="-rotate-90" />
        </ScrollBtn>
      </div>
    </div>
  </div>
);

const Banner = () => (
  <div className="absolute top-[247.500px] right-0 left-[4px] h-[206px] bg-black/65 font-[Inter,sans-serif] text-[66px] font-medium leading-[84px] tracking-[-2px]">
    <div className="flex h-[84px] pt-[18px] pl-[127px] text-white">
      <Fit width={178} className="mr-[19px]">HOW</Fit>
      <Fit width={94} className="mr-[21px]">TO</Fit>
      <Fit width={205}>MAKE</Fit>
    </div>
    <div className="flex pt-[18px] pl-[125px] text-[#1bb35c]">
      <Fit width={51} className="mr-[22px]">A</Fit>
      <Fit width={253} className="mr-[24px]">MIXING</Fit>
      <Fit width={420} className="mr-[17px]">REFERENCE</Fit>
      <Fit width={129}>SET</Fit>
    </div>
  </div>
);

export default function App() {
  return (
    <div className="relative h-[720px] w-[1280px] overflow-hidden bg-black pt-[9px] font-['Liberation_Sans',Arial,sans-serif]">
      <div className="ml-[2px] flex h-[702px] w-[1278px] flex-col overflow-hidden rounded-t-[4px] bg-[#303236]">
        <TitleBar />
        <Toolbar />
        <div className="mt-[3px] flex min-h-0 flex-1 pl-[2px]">
          <LeftPanel />
          <span className="w-[3px] shrink-0 bg-[#2a2a2a]" />
          <Editor />
          <span className="w-[3px] shrink-0 bg-[#2a2a2a]" />
          <ClipsPanel />
        </div>
      </div>
      <Banner />
    </div>
  );
}
